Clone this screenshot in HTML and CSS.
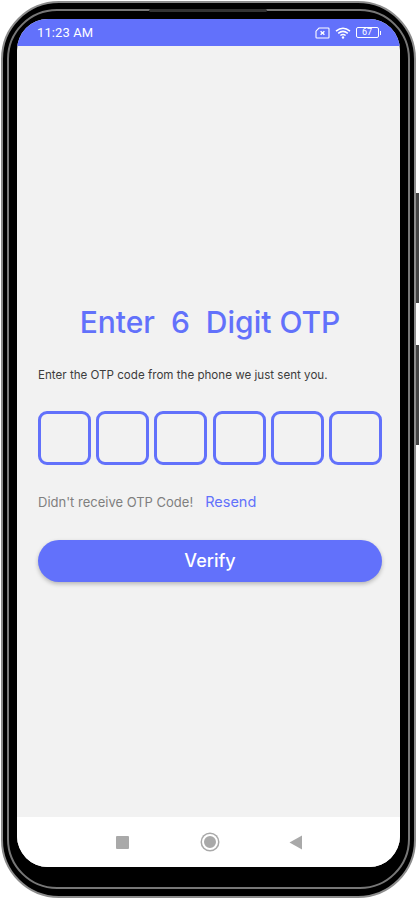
FILE: index.html
```html
<!DOCTYPE html>
<html>
<head>
    <title>Enter OTP</title>
    <link rel="stylesheet" href="styles.css">
</head>
<body>
    <div class="phone">
        <span class="side-btn side-btn-top"></span>
        <span class="side-btn side-btn-bottom"></span>
        <span class="speaker"></span>
        <div class="ring">
            <div class="screen">
                <div class="status-bar">
                    <span class="time">11:23 AM</span>
                    <div class="status-icons">
                        <svg width="15" height="12" viewBox="0 0 15 12" fill="none" stroke="#fff" stroke-width="1.1">
                            <path d="M4 1H13.2Q14 1 14 1.8V10.2Q14 11 13.2 11H1.8Q1 11 1 10.2V4.2Z"/>
                            <path d="M5.6 4.2L9.4 7.8M9.4 4.2L5.6 7.8" stroke-width="1.4"/>
                        </svg>
                        <svg width="16" height="12" viewBox="0 0 16 12" fill="none" stroke="#fff" stroke-width="1.5">
                            <path d="M1 4.2Q8 -1.6 15 4.2"/>
                            <path d="M3.2 6.4Q8 2.4 12.8 6.4"/>
                            <path d="M5.4 8.5Q8 6.4 10.6 8.5"/>
                            <circle cx="8" cy="10.5" r="1.2" fill="#fff" stroke="none"/>
                        </svg>
                        <div class="battery">
                            <span class="battery-body">67</span>
                            <span class="battery-tip"></span>
                        </div>
                    </div>
                </div>

                <div class="content">
                    <h1 class="title">Enter  6  Digit OTP</h1>
                    <p class="subtitle">Enter the OTP code from the phone we just sent you.</p>
                    <div class="otp-row">
                        <input class="otp-box" type="text" maxlength="1">
                        <input class="otp-box" type="text" maxlength="1">
                        <input class="otp-box" type="text" maxlength="1">
                        <input class="otp-box" type="text" maxlength="1">
                        <input class="otp-box" type="text" maxlength="1">
                        <input class="otp-box" type="text" maxlength="1">
                    </div>
                    <div class="resend-row">
                        <span class="resend-text">Didn't receive OTP Code!</span>
                        <a class="resend-link">Resend</a>
                    </div>
                    <button class="verify-btn" type="button">Verify</button>
                </div>

                <div class="nav-bar">
                    <span class="nav-square"></span>
                    <span class="nav-circle"></span>
                    <svg class="nav-back" width="14" height="15" viewBox="0 0 14 15"><path d="M13 0.5V14.5L0.5 7.5Z" fill="#a9a9a9"/></svg>
                </div>
            </div>
        </div>
    </div>
</body>
</html>
```

FILE: styles.css
```css
/* Marco del telefono */
html, body {
    margin: 0;
    background-color: #fff;
}

body {
    width: 420px;
    height: 900px;
    padding: 1px 0 0 1px;
    box-sizing: border-box;
    font-family: "Inter", "Noto Sans", sans-serif;
}

.phone {
    position: relative;
    width: 415px;
    height: 897px;
    box-sizing: border-box;
    padding: 6px 4px 7px 4px;
    background-color: #000;
    border: 2px solid #8c8c8c;
    border-radius: 58px;
}

.ring {
    height: 100%;
    box-sizing: border-box;
    padding: 8px 8px 20px 8px;
    background-color: #000;
    border: 2px solid #777;
    border-radius: 50px;
}

.side-btn {
    position: absolute;
    right: -5px;
    width: 3px;
    background-color: #444;
}

.side-btn-top {
    top: 190px;
    height: 110px;
}

.side-btn-bottom {
    top: 342px;
    height: 100px;
}

.speaker {
    position: absolute;
    top: 6px;
    left: 146px;
    width: 118px;
    height: 3px;
    background-color: #333;
    border-radius: 2px;
}

.screen {
    height: 100%;
    display: flex;
    flex-direction: column;
    overflow: hidden;
    background-color: #f2f2f2;
    border-radius: 31px;
}

/* Barra de estado */
.status-bar {
    height: 27px;
    flex-shrink: 0;
    display: flex;
    align-items: center;
    justify-content: space-between;
    padding: 0 19px 0 20px;
    background-color: #6271fb;
    color: #fff;
}

.time {
    font-family: "Roboto", sans-serif;
    font-size: 13px;
    letter-spacing: 0.1px;
}

.status-icons {
    display: flex;
    align-items: center;
    gap: 5px;
}

.battery {
    display: flex;
    align-items: center;
    gap: 1px;
}

.battery-body {
    width: 21px;
    height: 9px;
    border: 1px solid #fff;
    border-radius: 2px;
    font-family: "Roboto", sans-serif;
    font-size: 9px;
    line-height: 9px;
    text-align: center;
}

.battery-tip {
    width: 1.5px;
    height: 4px;
    background-color: #fff;
}

/* Contenido */
.content {
    flex: 1;
    padding: 256px 18px 0 21px;
}

.title {
    margin: 0;
    font-size: 30px;
    line-height: 40px;
    font-weight: 500;
    text-align: center;
    color: #6271fb;
    white-space: pre-wrap;
}

.subtitle {
    margin: 24px 0 0 0;
    font-size: 11.6px;
    line-height: 18px;
    color: #3d3d3d;
}

.otp-row {
    display: flex;
    justify-content: space-between;
    margin-top: 27px;
}

.otp-box {
    width: 53px;
    height: 54px;
    box-sizing: border-box;
    padding: 0;
    background: transparent;
    border: 3px solid #6271fb;
    border-radius: 9px;
}

.resend-row {
    display: flex;
    align-items: center;
    gap: 12px;
    margin-top: 28px;
}

.resend-text {
    font-size: 13px;
    color: #7f7f7f;
}

.resend-link {
    font-size: 14.5px;
    color: #6271fb;
}

.verify-btn {
    display: block;
    width: 100%;
    height: 42px;
    margin-top: 30px;
    padding: 0 0 2px 0;
    background-color: #6271fb;
    color: #fff;
    border: none;
    border-radius: 21px;
    font-family: inherit;
    font-size: 18px;
    font-weight: 500;
    box-shadow: 0 2px 4px rgba(0, 0, 0, 0.25);
}

/* Barra de navegacion */
.nav-bar {
    height: 50px;
    flex-shrink: 0;
    display: flex;
    align-items: center;
    justify-content: center;
    gap: 73px;
    padding-left: 1px;
    background-color: #fff;
}

.nav-square {
    width: 13px;
    height: 13px;
    background-color: #a9a9a9;
    border-radius: 1px;
}

.nav-circle {
    width: 12px;
    height: 12px;
    background-color: #a9a9a9;
    border: 2px solid #fff;
    border-radius: 50%;
    box-shadow: 0 0 0 1.5px #a9a9a9;
}

.nav-back {
    margin-left: -2px;
}
```
